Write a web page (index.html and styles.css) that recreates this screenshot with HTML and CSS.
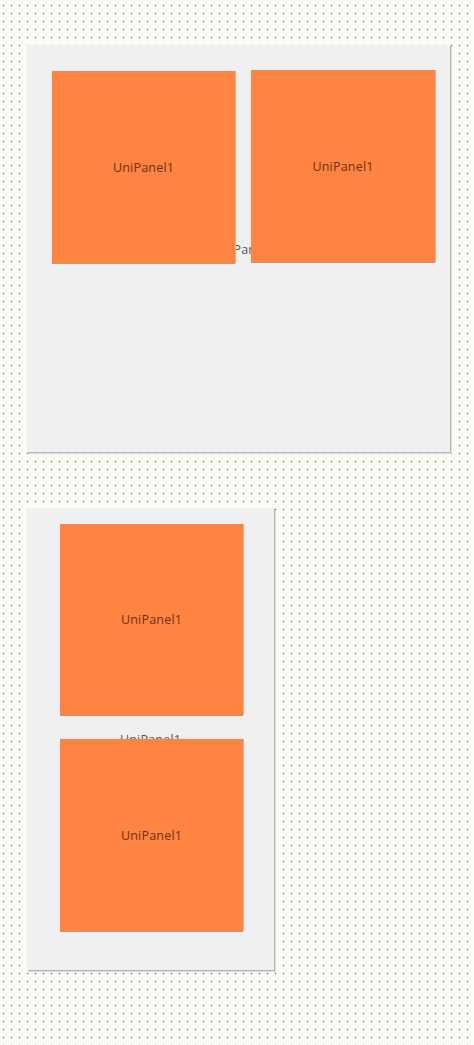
FILE: index.html
```html
<!DOCTYPE html>
<html>
<head>
<meta charset="utf-8">
<link rel="stylesheet" href="styles.css">
</head>
<body>
<div class="canvas">
  <div class="panel panel-row">
    <span class="caption caption-row">UniPanel1</span>
    <div class="box box-a">UniPanel1</div>
    <div class="box box-b">UniPanel1</div>
  </div>
  <div class="panel panel-col">
    <span class="caption">UniPanel1</span>
    <div class="box box-c">UniPanel1</div>
    <div class="box box-d">UniPanel1</div>
  </div>
</div>
</body>
</html>
```
FILE: styles.css
```css
html, body {
  margin: 0;
  padding: 0;
}
body {
  width: 474px;
  height: 1045px;
  background-color: #fdfbf5;
  background-image: radial-gradient(circle at 3.5px 5.5px, #808080 0, #909090 0.6px, rgba(160,160,160,0) 1.2px);
  background-size: 8px 8px;
  font-family: "Open Sans", "Liberation Sans", sans-serif;
  overflow: hidden;
}
.canvas {
  display: flex;
  flex-direction: column;
  align-items: flex-start;
  gap: 56px;
  padding: 45px 0 0 27px;
}
.panel {
  position: relative;
  background: #f0f0f0;
  box-shadow: 1px 1px 0 #b5b5b5, 2px 2px 0 #dedede;
  box-sizing: border-box;
}
.caption {
  position: absolute;
  left: 0;
  right: 0;
  top: 50%;
  transform: translateY(-50%);
  text-align: center;
  font-size: 12.5px;
  letter-spacing: 0.2px;
  color: #555;
  z-index: 0;
}
.caption-row {
  text-indent: 10px;
}
.panel-row {
  width: 423px;
  height: 407px;
  display: flex;
  align-items: flex-start;
  gap: 16px;
  padding: 26px 0 0 25px;
}
.panel-col {
  width: 247px;
  height: 462px;
  display: flex;
  flex-direction: column;
  gap: 24px;
  padding: 16px 0 0 33px;
}
.box {
  position: relative;
  z-index: 1;
  background: #ff8442;
  box-shadow: 0 1px 0 #b89a88, 1px 0 0 #e0b090;
  display: flex;
  align-items: center;
  justify-content: center;
  font-size: 12.5px;
  letter-spacing: 0.2px;
  color: #6e3010;
}
.box-a {
  width: 183px;
  height: 192px;
}
.box-b {
  width: 184px;
  height: 192px;
  margin-top: -1px;
}
.box-c {
  width: 183px;
  height: 191px;
}
.box-d {
  width: 183px;
  height: 192px;
}
```
